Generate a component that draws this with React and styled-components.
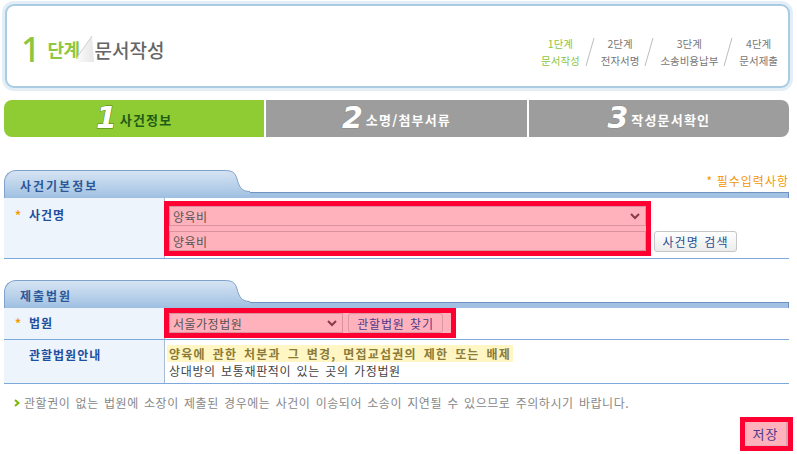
import React from 'react';
import styled, { createGlobalStyle } from 'styled-components';

const Global = createGlobalStyle`
  html, body { margin: 0; padding: 0; background: #fff; }
  body {
    font-family: "Noto Sans CJK KR", "Noto Sans", sans-serif;
    font-size: 12px;
    color: #333;
  }
  * { box-sizing: border-box; }
`;

const Page = styled.div`
  width: 797px;
  padding: 4px 8px 0 4px;
`;

const HeaderBox = styled.div`
  height: 84px;
  margin: 0 -1px 0 1px;
  border: 2px solid #a9cce3;
  border-radius: 9px;
  box-shadow: 0 0 0 3px #e3eef6;
  display: flex;
  align-items: center;
  padding: 6px 10px 0 14px;
  background: #fff;
`;

const Title = styled.div`
  display: flex;
  align-items: center;
`;

const StepNum = styled.span`
  font-family: "Noto Sans", sans-serif;
  font-size: 34px;
  line-height: 1;
  color: #8dc63f;
  font-weight: 500;
  margin-right: 7px;
`;

const StepWord = styled.span`
  font-size: 18px;
  font-weight: 700;
  color: #8dc63f;
  letter-spacing: -0.5px;
`;

const Fold = styled.svg`
  width: 24px;
  height: 30px;
  margin: 0 1px 0 -10px;
  flex: none;
`;

const TitleText = styled.span`
  font-size: 19px;
  font-weight: 500;
  color: #666;
`;

const Steps = styled.div`
  margin-left: auto;
  margin-top: 6px;
  display: flex;
  align-items: center;
  gap: 1px;
`;

const StepItem = styled.div`
  text-align: center;
  font-size: 10.5px;
  line-height: 17px;
  color: ${p => (p.$active ? '#8dc63f' : '#777')};
`;

const Slash = () => (
  <svg width="19" height="30" viewBox="0 0 19 30" style={{ flex: 'none' }}>
    <line x1="13" y1="1" x2="5" y2="29" stroke="#bdbdbd" strokeWidth="1" />
  </svg>
);

const Tabs = styled.div`
  display: grid;
  grid-template-columns: 1fr 1fr 1fr;
  gap: 2px;
  margin-top: 12px;
  height: 37px;
`;

const Tab = styled.div`
  display: flex;
  align-items: center;
  justify-content: center;
  gap: 3px;
  background: ${p => (p.$active ? '#8fcc33' : '#9d9d9d')};
  border-radius: ${p => p.$radius};
`;

const TabNum = styled.span`
  font-family: "DejaVu Sans", sans-serif;
  font-style: italic;
  font-weight: 700;
  font-size: 30px;
  line-height: 1;
  color: #fff;
  -webkit-text-stroke: 1px ${p => (p.$active ? '#4f7d1c' : '#8a8a8a')};
  paint-order: stroke fill;
  margin-top: -2px;
`;

const TabLabel = styled.span`
  font-size: 13px;
  font-weight: 700;
  letter-spacing: 1.2px;
  color: ${p => (p.$active ? '#1f5c17' : '#fff')};
  margin-top: 2px;
`;

const SectionHead = styled.div`
  display: flex;
  height: 28px;
  margin-top: ${p => p.$mt}px;
`;

const HeadTab = styled.div`
  width: 220px;
  flex: none;
  border: 1px solid #7fa2cb;
  border-bottom: none;
  border-right: none;
  border-radius: 12px 0 0 0;
  background: linear-gradient(#d6e4f3, #b6cfe9 60%, #9fbfe1);
  display: flex;
  align-items: center;
  padding: 2px 0 0 15px;
  font-size: 12px;
  font-weight: 700;
  letter-spacing: 2px;
  color: #2b5899;
`;

const Curve = styled.svg`
  flex: none;
  width: 26px;
  height: 28px;
  display: block;
`;

const HeadRest = styled.div`
  flex: 1;
  display: flex;
  flex-direction: column;
  justify-content: flex-end;
`;

const Note = styled.div`
  text-align: right;
  color: #f39800;
  font-size: 12px;
  margin: 0 0 3px;
  letter-spacing: 1px;
`;

const Bar = styled.div`
  height: 6px;
  background: #a2c0e2;
  border-top: 1px solid #6f93c2;
  border-right: 1px solid #6f93c2;
`;

const Row = styled.div`
  display: grid;
  grid-template-columns: 161px 1fr;
  border-bottom: 1px solid #7ea9dd;
  min-height: ${p => p.$h}px;
`;

const Label = styled.div`
  background: #eef4fc;
  border-right: 1px solid #a8bcd6;
  padding: ${p => p.$pt}px 0 0 11px;
  font-size: 12px;
  font-weight: 700;
  letter-spacing: 1px;
  color: #1e4f9e;
  display: flex;
  align-items: flex-start;
`;

const Star = styled.span`
  color: #f39800;
  font-size: 12px;
  width: 14px;
  flex: none;
  font-weight: 700;
`;

const Cell = styled.div`
  display: flex;
  align-items: ${p => p.$align || 'flex-start'};
  gap: 3px;
  padding: ${p => p.$pad || '0'};
  margin-left: -1px;
`;

const RedBox = styled.div`
  border: 5px solid #ff0033;
  background: #ffb1bc;
  display: flex;
  flex-direction: ${p => (p.$col ? 'column' : 'row')};
  gap: 5px;
  width: ${p => p.$w}px;
  padding-right: ${p => p.$pr || 0}px;
`;

const SelectWrap = styled.div`
  position: relative;
  width: ${p => (p.$w ? `${p.$w}px` : '100%')};
  height: 20px;
`;

const Select = styled.select`
  appearance: none;
  -webkit-appearance: none;
  width: 100%;
  height: 20px;
  border: 1px solid #d9929e;
  background: #ffb1bc;
  color: #555;
  font-family: "Noto Sans CJK KR", sans-serif;
  font-size: 12px;
  letter-spacing: 0.5px;
  padding: 0 0 0 3px;
  outline: none;
  border-radius: 0;
`;

const Chevron = styled.svg`
  position: absolute;
  right: 6px;
  top: 7px;
  pointer-events: none;
`;

const Input = styled.input`
  width: 100%;
  height: 20px;
  border: 1px solid #d9929e;
  background: #ffb1bc;
  color: #555;
  font-family: "Noto Sans CJK KR", sans-serif;
  font-size: 12px;
  letter-spacing: 0.5px;
  padding: 0 0 0 3px;
  outline: none;
`;

const GrayButton = styled.button`
  height: 21px;
  width: 83px;
  border: 1px solid #c6c6c6;
  border-radius: 3px;
  background: linear-gradient(#ffffff, #ececec);
  color: #1f4f96;
  font-family: "Noto Sans CJK KR", sans-serif;
  font-size: 12px;
  letter-spacing: 1px;
  word-spacing: 2px;
  padding: 0;
  margin-bottom: 4px;
`;

const PinkButton = styled.button`
  height: 20px;
  width: ${p => p.$w}px;
  border: 1px solid #d99aa6;
  border-radius: 3px;
  background: #ffb1bc;
  color: #4e3b8c;
  font-family: "Noto Sans CJK KR", sans-serif;
  font-size: 12px;
  letter-spacing: 0.8px;
  word-spacing: 2px;
  padding: 0;
`;

const Guide = styled.div`
  display: flex;
  flex-direction: column;
  align-items: flex-start;
  padding: 5px 0 0 3px;
`;

const Highlight = styled.span`
  background: #fff6c3;
  color: #8c7b38;
  font-weight: 700;
  font-size: 12px;
  line-height: 17px;
  letter-spacing: 1.2px;
  word-spacing: 3px;
  padding: 0 2px;
`;

const Plain = styled.span`
  color: #444;
  font-size: 12px;
  line-height: 18px;
  letter-spacing: 0.65px;
  word-spacing: 2px;
  padding-left: 2px;
`;

const Notice = styled.div`
  margin-top: 11px;
  display: flex;
  align-items: center;
  gap: 4px;
  padding-left: 10px;
  color: #888;
  font-size: 12px;
  letter-spacing: 0.55px;
  word-spacing: 2px;
  line-height: 16px;
`;

const SaveRow = styled.div`
  display: flex;
  justify-content: flex-end;
  margin: 6px -4px 0 0;
`;

const SaveBox = styled.div`
  border: 5px solid #ff0033;
  background: #fff;
`;

const SaveButton = styled.button`
  width: 43px;
  height: 24px;
  border: none;
  border-right: 2px solid #d8a0a8;
  border-bottom: 1px solid #e3b0b8;
  background: #ffb1bc;
  color: #4a3b8a;
  font-family: "Noto Sans CJK KR", sans-serif;
  font-size: 13px;
  letter-spacing: 1px;
  padding: 0;
  display: block;
`;

const Down = () => (
  <Chevron width="10" height="7" viewBox="0 0 10 7">
    <path d="M1 1 L5 5 L9 1" fill="none" stroke="#8a3a48" strokeWidth="2" />
  </Chevron>
);

const HeadCurve = ({ id }) => (
  <Curve viewBox="0 0 26 28" preserveAspectRatio="none">
    <defs>
      <linearGradient id={id} x1="0" y1="0" x2="0" y2="1">
        <stop offset="0" stopColor="#d6e4f3" />
        <stop offset="0.6" stopColor="#b6cfe9" />
        <stop offset="1" stopColor="#9fbfe1" />
      </linearGradient>
    </defs>
    <path d="M0 0.5 C8 0.5 11 2 13 9 C15 16 17 21.5 26 21.5 L26 28 L0 28 Z" fill={`url(#${id})`} />
    <path d="M0 0.5 C8 0.5 11 2 13 9 C15 16 17 21.5 26 21.5" fill="none" stroke="#7fa2cb" strokeWidth="1" />
  </Curve>
);

export default function App() {
  return (
    <>
      <Global />
      <Page>
        <HeaderBox>
          <Title>
            <StepNum>1</StepNum>
            <StepWord>단계</StepWord>
            <Fold viewBox="0 0 24 30">
              <defs>
                <linearGradient id="fg" x1="0" y1="0" x2="1" y2="0">
                  <stop offset="0" stopColor="#ffffff" />
                  <stop offset="1" stopColor="#dcdcdc" />
                </linearGradient>
              </defs>
              <polygon points="22,2 4,28 24,28" fill="url(#fg)" opacity="0.7" />
              <line x1="22" y1="2" x2="8" y2="22" stroke="#cfcfcf" strokeWidth="1" />
            </Fold>
            <TitleText>문서작성</TitleText>
          </Title>
          <Steps>
            <StepItem $active>1단계<br />문서작성</StepItem>
            <Slash />
            <StepItem>2단계<br />전자서명</StepItem>
            <Slash />
            <StepItem>3단계<br />소송비용납부</StepItem>
            <Slash />
            <StepItem>4단계<br />문서제출</StepItem>
          </Steps>
        </HeaderBox>

        <Tabs>
          <Tab $active $radius="8px 0 0 8px">
            <TabNum $active>1</TabNum>
            <TabLabel $active>사건정보</TabLabel>
          </Tab>
          <Tab $radius="0">
            <TabNum>2</TabNum>
            <TabLabel>소명/첨부서류</TabLabel>
          </Tab>
          <Tab $radius="0 8px 8px 0">
            <TabNum>3</TabNum>
            <TabLabel>작성문서확인</TabLabel>
          </Tab>
        </Tabs>

        <SectionHead $mt={33}>
          <HeadTab>사건기본정보</HeadTab>
          <HeadCurve id="c1" />
          <HeadRest>
            <Note>* 필수입력사항</Note>
            <Bar />
          </HeadRest>
        </SectionHead>
        <Row $h={59}>
          <Label $pt={8}><Star>*</Star>사건명</Label>
          <Cell $align="flex-end" $pad="3px 0 2px 0">
            <RedBox $col $w={487}>
              <SelectWrap>
                <Select defaultValue="양육비">
                  <option>양육비</option>
                </Select>
                <Down />
              </SelectWrap>
              <Input defaultValue="양육비" readOnly />
            </RedBox>
            <GrayButton>사건명 검색</GrayButton>
          </Cell>
        </Row>

        <SectionHead $mt={21}>
          <HeadTab>제출법원</HeadTab>
          <HeadCurve id="c2" />
          <HeadRest>
            <Bar />
          </HeadRest>
        </SectionHead>
        <Row $h={31}>
          <Label $pt={6}><Star>*</Star>법원</Label>
          <Cell $pad="0 0 1px 0">
            <RedBox $w={292} $pr={8}>
              <SelectWrap $w={174}>
                <Select defaultValue="서울가정법원">
                  <option>서울가정법원</option>
                </Select>
                <Down />
              </SelectWrap>
              <PinkButton $w={95}>관할법원 찾기</PinkButton>
            </RedBox>
          </Cell>
        </Row>
        <Row $h={44}>
          <Label $pt={6}><Star />관할법원안내</Label>
          <Cell>
            <Guide>
              <Highlight>양육에 관한 처분과 그 변경, 면접교섭권의 제한 또는 배제</Highlight>
              <Plain>상대방의 보통재판적이 있는 곳의 가정법원</Plain>
            </Guide>
          </Cell>
        </Row>

        <Notice>
          <svg width="6" height="8" viewBox="0 0 6 8">
            <path d="M1 1 L4.5 4 L1 7" fill="none" stroke="#7ab800" strokeWidth="2" />
          </svg>
          관할권이 없는 법원에 소장이 제출된 경우에는 사건이 이송되어 소송이 지연될 수 있으므로 주의하시기 바랍니다.
        </Notice>

        <SaveRow>
          <SaveBox>
            <SaveButton>저장</SaveButton>
          </SaveBox>
        </SaveRow>
      </Page>
    </>
  );
}
